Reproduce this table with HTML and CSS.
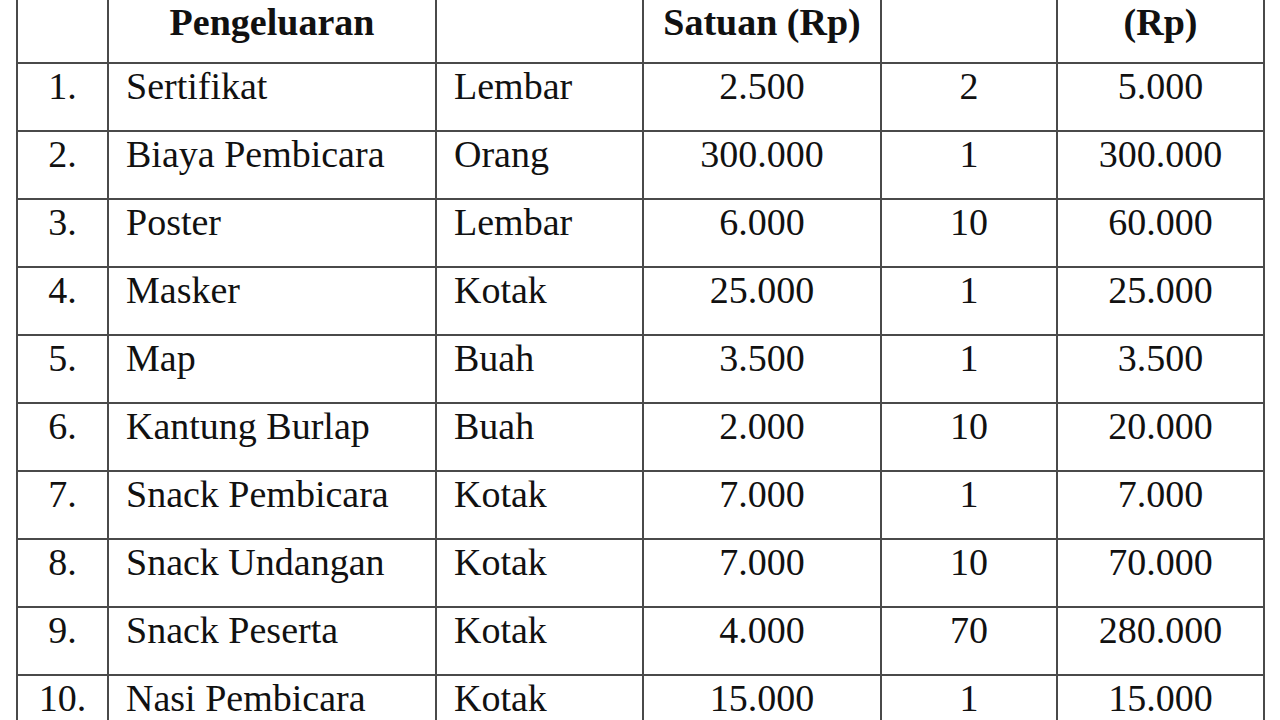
FILE: index.html
```html
<!DOCTYPE html>
<html lang="id">
<head>
<meta charset="utf-8">
<title>Anggaran</title>
<link rel="stylesheet" href="styles.css">
</head>
<body>
<table class="budget">
  <colgroup>
    <col class="c-no">
    <col class="c-item">
    <col class="c-unit">
    <col class="c-price">
    <col class="c-qty">
    <col class="c-total">
  </colgroup>
  <thead>
    <tr>
      <th></th>
      <th>Pengeluaran</th>
      <th></th>
      <th>Satuan (Rp)</th>
      <th></th>
      <th>(Rp)</th>
    </tr>
  </thead>
  <tbody>
    <tr><td class="num">1.</td><td class="txt">Sertifikat</td><td class="txt">Lembar</td><td class="num">2.500</td><td class="num">2</td><td class="num">5.000</td></tr>
    <tr><td class="num">2.</td><td class="txt">Biaya Pembicara</td><td class="txt">Orang</td><td class="num">300.000</td><td class="num">1</td><td class="num">300.000</td></tr>
    <tr><td class="num">3.</td><td class="txt">Poster</td><td class="txt">Lembar</td><td class="num">6.000</td><td class="num">10</td><td class="num">60.000</td></tr>
    <tr><td class="num">4.</td><td class="txt">Masker</td><td class="txt">Kotak</td><td class="num">25.000</td><td class="num">1</td><td class="num">25.000</td></tr>
    <tr><td class="num">5.</td><td class="txt">Map</td><td class="txt">Buah</td><td class="num">3.500</td><td class="num">1</td><td class="num">3.500</td></tr>
    <tr><td class="num">6.</td><td class="txt">Kantung Burlap</td><td class="txt">Buah</td><td class="num">2.000</td><td class="num">10</td><td class="num">20.000</td></tr>
    <tr><td class="num">7.</td><td class="txt">Snack Pembicara</td><td class="txt">Kotak</td><td class="num">7.000</td><td class="num">1</td><td class="num">7.000</td></tr>
    <tr><td class="num">8.</td><td class="txt">Snack Undangan</td><td class="txt">Kotak</td><td class="num">7.000</td><td class="num">10</td><td class="num">70.000</td></tr>
    <tr><td class="num">9.</td><td class="txt">Snack Peserta</td><td class="txt">Kotak</td><td class="num">4.000</td><td class="num">70</td><td class="num">280.000</td></tr>
    <tr><td class="num">10.</td><td class="txt">Nasi Pembicara</td><td class="txt">Kotak</td><td class="num">15.000</td><td class="num">1</td><td class="num">15.000</td></tr>
  </tbody>
</table>
</body>
</html>
```

FILE: styles.css
```css
html, body {
  margin: 0;
  padding: 0;
  background: #ffffff;
  overflow: hidden;
}

.budget {
  margin: -2px 0 0 16px;
  border-collapse: collapse;
  table-layout: fixed;
  width: 1247px;
  font-family: "Liberation Serif", "Times New Roman", serif;
  font-size: 38px;
  line-height: 44px;
  color: #111111;
}

.c-no { width: 91px; }
.c-item { width: 328px; }
.c-unit { width: 207px; }
.c-price { width: 238px; }
.c-qty { width: 176px; }
.c-total { width: 207px; }

.budget th,
.budget td {
  border: 2px solid #4a4a4a;
  padding: 0;
  white-space: nowrap;
  overflow: hidden;
}

.budget th {
  height: 61px;
  vertical-align: bottom;
  padding-bottom: 18px;
  font-weight: bold;
  text-align: center;
  box-sizing: border-box;
}

.budget td {
  height: 68px;
  vertical-align: top;
  box-sizing: border-box;
}

.budget td.num {
  text-align: center;
}

.budget td.txt {
  text-align: left;
  padding-left: 17px;
}
```
